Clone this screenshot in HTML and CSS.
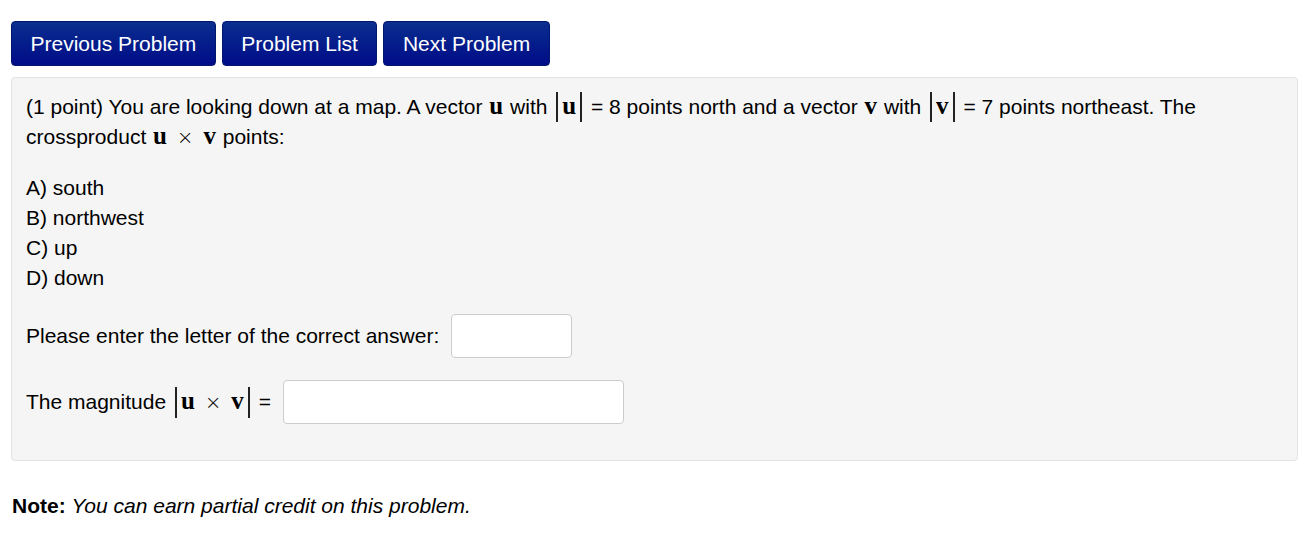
FILE: index.html
```html
<!DOCTYPE html>
<html>
<head>
<meta charset="utf-8">
<link rel="stylesheet" href="styles.css">
</head>
<body>
<div class="nav">
  <a class="btn">Previous Problem</a>
  <a class="btn">Problem List</a>
  <a class="btn">Next Problem</a>
</div>
<div class="panel">
  <p class="q">(1 point) You are looking down at a map. A vector <b class="m">u</b> with <span class="abs"><b class="m">u</b></span> = 8 points north and a vector <b class="m">v</b> with <span class="abs"><b class="m">v</b></span> = 7 points northeast. The crossproduct <b class="m">u</b> <span class="times">×</span> <b class="m">v</b> points:</p>
  <div class="choices">
    <div>A) south</div>
    <div>B) northwest</div>
    <div>C) up</div>
    <div>D) down</div>
  </div>
  <div class="row r1">Please enter the letter of the correct answer: <span class="inp small"></span></div>
  <div class="row r2">The magnitude <span class="abs"><b class="m">u</b> <span class="times">×</span> <b class="m">v</b></span> = <span class="inp wide"></span></div>
</div>
<p class="note"><b>Note:</b> <i>You can earn partial credit on this problem.</i></p>
</body>
</html>
```
FILE: styles.css
```css
body {
  margin: 0;
  padding: 0 14px 0 11px;
  font-family: "Liberation Sans", Arial, sans-serif;
  font-size: 21px;
  color: #000;
  background: #fff;
}
.nav {
  display: flex;
  gap: 6px;
  padding-top: 21px;
}
.btn {
  display: inline-block;
  height: 45px;
  box-sizing: border-box;
  line-height: 43px;
  padding: 0 18.5px;
  color: #fff;
  font-size: 21px;
  background: linear-gradient(#0a2e8e, #000c88);
  border: 1px solid #00176e;
  border-radius: 4px;
}
.panel {
  margin-top: 11px;
  background: #f5f5f5;
  border: 1px solid #e3e3e3;
  border-radius: 4px;
  padding: 14px 14px 30px 14px;
  height: 384px;
  box-sizing: border-box;
}
.q {
  margin: 0;
  line-height: 30px;
}
.m {
  font-family: "Liberation Serif", "Times New Roman", serif;
  font-weight: bold;
  font-size: 25px;
  line-height: 20px;
  margin: 0 1px;
}
.times {
  font-family: "DejaVu Sans", sans-serif;
  font-weight: 300;
  font-size: 20px;
  margin: 0 3px;
}
.abs {
  border-left: 2px solid #222;
  border-right: 2px solid #222;
  padding: 3px 3px 4px;
  margin: 0 3px;
}
.choices {
  margin-top: 21px;
  line-height: 30px;
}
.row {
  display: flex;
  align-items: center;
  white-space: pre;
}
.r1 { margin-top: 21px; }
.r2 { margin-top: 22px; }
.inp {
  display: inline-block;
  height: 44px;
  box-sizing: border-box;
  background: #fff;
  border: 1px solid #ccc;
  border-radius: 4px;
  margin-left: 6px;
}
.small { width: 121px; }
.wide { width: 341px; }
.note {
  margin: 33px 0 0 1px;
}
```
